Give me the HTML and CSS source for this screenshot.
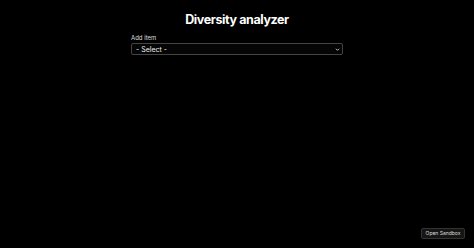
FILE: index.html
```html
<!DOCTYPE html>
<html>
<head>
<meta charset="utf-8">
<link rel="stylesheet" href="styles.css">
</head>
<body>
<main class="app">
  <h1 class="title">Diversity analyzer</h1>
  <label class="field">
    <span class="label">Add item</span>
    <span class="select">
      <span class="select-text">- Select -</span>
      <svg class="chev" viewBox="0 0 8 8" width="5" height="5"><path d="M1.5 2.8 L4 5.3 L6.5 2.8" fill="none" stroke="#ddd" stroke-width="1.4"/></svg>
    </span>
  </label>
</main>
<button class="sandbox">Open Sandbox</button>
</body>
</html>
```
FILE: styles.css
```css
html, body {
  margin: 0;
  padding: 0;
  background: #000;
  color: #fff;
  font-family: Inter, "Noto Sans", sans-serif;
  width: 474px;
  height: 248px;
  overflow: hidden;
}
.app {
  width: 212px;
  margin: 0 auto;
  padding-top: 11px;
  display: flex;
  flex-direction: column;
}
.title {
  margin: 0;
  font-size: 12.5px;
  line-height: 18px;
  font-weight: 700;
  text-align: center;
  letter-spacing: -0.4px;
}
.field {
  display: flex;
  flex-direction: column;
  margin-top: 5px;
}
.label {
  font-size: 6px;
  line-height: 8px;
  color: #ddd;
}
.select {
  margin-top: 1px;
  height: 12px;
  box-sizing: border-box;
  border: 1px solid #444;
  border-radius: 2px;
  background: #050505;
  display: flex;
  align-items: center;
  justify-content: space-between;
  padding: 0 2px 0 4px;
}
.select-text {
  font-size: 7px;
  color: #eee;
}
.chev { display: block; }
.sandbox {
  position: fixed;
  right: 9px;
  bottom: 9px;
  width: 44px;
  height: 11px;
  padding: 0;
  background: #151515;
  border: 1px solid #333;
  border-radius: 2px;
  color: #ddd;
  font-family: Inter, sans-serif;
  font-size: 5px;
  line-height: 9px;
  text-align: center;
}
```
